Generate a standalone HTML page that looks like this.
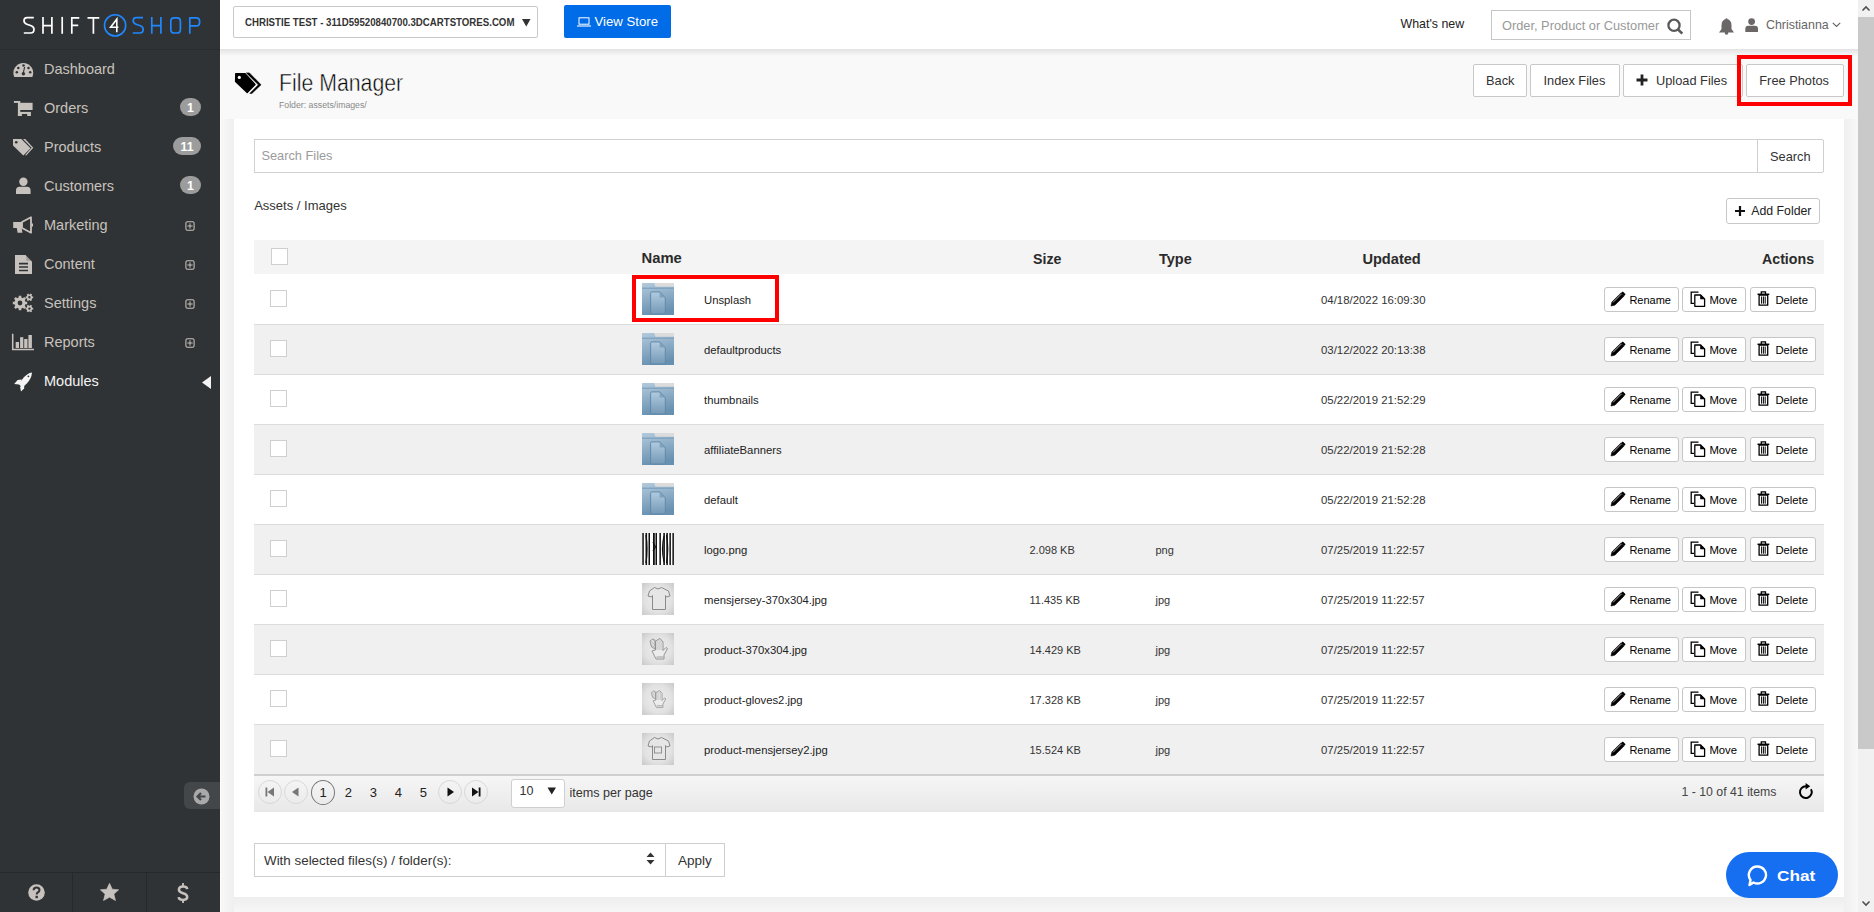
<!DOCTYPE html><html><head><meta charset="utf-8"><title>File Manager</title><style>
html,body{margin:0;padding:0;}
body{width:1874px;height:912px;overflow:hidden;position:relative;background:#f9f9f9;font-family:"Liberation Sans",sans-serif;}
.t{position:absolute;white-space:nowrap;line-height:1;}
.b{position:absolute;box-sizing:border-box;}
</style></head><body>
<div class="b" style="left:220px;top:49px;width:1638px;height:863px;background:#f9f9f9;"></div>
<div class="b" style="left:220px;top:119px;width:14px;height:793px;background:linear-gradient(to right,#f8f8f8,#efefef);"></div>
<div class="b" style="left:1844px;top:119px;width:14px;height:793px;background:linear-gradient(to right,#efefef,#f8f8f8);"></div>
<div class="b" style="left:234px;top:897px;width:1610px;height:15px;background:linear-gradient(#eeeeee,#f6f6f6);"></div>
<div class="b" style="left:220px;top:0px;width:1px;height:912px;background:#fdfdfd;"></div>
<div class="b" style="left:234px;top:119px;width:1610px;height:778px;background:#fff;"></div>
<div class="b" style="left:0px;top:0px;width:220px;height:912px;background:#303335;"></div>
<div class="b" style="left:0px;top:49px;width:220px;height:1px;background:#2a2d2f;"></div>
<svg class="b" style="left:0px;top:0px;" width="220" height="49" viewBox="0 0 220 49"><g fill="none" stroke="#fff" stroke-width="1.7" stroke-linecap="butt" stroke-linejoin="round">
<path d="M33.8 17.7 H27.2 Q24 17.7 24 20.8 Q24 23.2 26.8 24.2 L31.2 25.8 Q34 26.8 34 29.6 Q34 33 30.6 33 H23.8"/>
<path d="M43 16.9 V33.8 M51.9 16.9 V33.8 M43 25.6 H51.9"/>
<path d="M62.2 16.9 V33.8"/>
<path d="M71.8 16.9 V33.8 M71 17.8 H79.3 M71.8 25.4 H78.2"/>
<path d="M87.5 17.8 H99.3 M93.4 17.8 V33.8"/>
</g>
<circle cx="115.1" cy="25.4" r="10.6" fill="none" stroke="#1f88ff" stroke-width="1.6"/>
<path d="M116.8 32.2 V19.2 L110.6 27.3 H118.4" fill="none" stroke="#fff" stroke-width="1.6" stroke-linejoin="miter"/>
<g fill="none" stroke="#1f88ff" stroke-width="1.7" stroke-linejoin="round">
<path d="M143 17.7 H136.4 Q133.2 17.7 133.2 20.8 Q133.2 23.2 136 24.2 L140.4 25.8 Q143.2 26.8 143.2 29.6 Q143.2 33 139.8 33 H132.8"/>
<path d="M151.8 16.9 V33.8 M160.9 16.9 V33.8 M151.8 25.6 H160.9"/>
<path d="M174.2 17.8 h2.8 q3.4 0 3.4 3.6 v8 q0 3.6 -3.4 3.6 h-2.8 q-3.4 0 -3.4 -3.6 v-8 q0 -3.6 3.4 -3.6 z"/>
<path d="M189.8 33.8 V17.8 H196.2 Q199.6 17.8 199.6 21.2 V22.4 Q199.6 25.8 196.2 25.8 H189.8"/>
</g></svg>
<div class="t" style="left:44.00px;top:61.73px;font-size:14.5px;color:#c7c2bd;">Dashboard</div>
<div class="t" style="left:44.00px;top:100.73px;font-size:14.5px;color:#c7c2bd;">Orders</div>
<div class="b" style="left:180px;top:98px;width:21px;height:18px;background:#9c9c9c;border-radius:9px;"></div>
<div class="t" style="left:180.00px;top:102.29px;font-size:12.3px;color:#fff;font-weight:bold;width:21px;text-align:center;">1</div>
<div class="t" style="left:44.00px;top:139.73px;font-size:14.5px;color:#c7c2bd;">Products</div>
<div class="b" style="left:173px;top:137px;width:28px;height:18px;background:#9c9c9c;border-radius:9px;"></div>
<div class="t" style="left:173.00px;top:141.29px;font-size:12.3px;color:#fff;font-weight:bold;width:28px;text-align:center;">11</div>
<div class="t" style="left:44.00px;top:178.73px;font-size:14.5px;color:#c7c2bd;">Customers</div>
<div class="b" style="left:180px;top:176px;width:21px;height:18px;background:#9c9c9c;border-radius:9px;"></div>
<div class="t" style="left:180.00px;top:180.29px;font-size:12.3px;color:#fff;font-weight:bold;width:21px;text-align:center;">1</div>
<div class="t" style="left:44.00px;top:217.73px;font-size:14.5px;color:#c7c2bd;">Marketing</div>
<svg class="b" style="left:184.5px;top:221.4px;" width="10" height="10" viewBox="0 0 10 10"><rect x="0.9" y="0.7" width="8.2" height="8.6" rx="1.5" fill="none" stroke="#c7c2bd" stroke-width="1.05"/><path d="M5 2.3 V7.7 M2.4 5 H7.6" stroke="#c7c2bd" stroke-width="1"/></svg>
<div class="t" style="left:44.00px;top:256.73px;font-size:14.5px;color:#c7c2bd;">Content</div>
<svg class="b" style="left:184.5px;top:260.4px;" width="10" height="10" viewBox="0 0 10 10"><rect x="0.9" y="0.7" width="8.2" height="8.6" rx="1.5" fill="none" stroke="#c7c2bd" stroke-width="1.05"/><path d="M5 2.3 V7.7 M2.4 5 H7.6" stroke="#c7c2bd" stroke-width="1"/></svg>
<div class="t" style="left:44.00px;top:295.73px;font-size:14.5px;color:#c7c2bd;">Settings</div>
<svg class="b" style="left:184.5px;top:299.4px;" width="10" height="10" viewBox="0 0 10 10"><rect x="0.9" y="0.7" width="8.2" height="8.6" rx="1.5" fill="none" stroke="#c7c2bd" stroke-width="1.05"/><path d="M5 2.3 V7.7 M2.4 5 H7.6" stroke="#c7c2bd" stroke-width="1"/></svg>
<div class="t" style="left:44.00px;top:334.73px;font-size:14.5px;color:#c7c2bd;">Reports</div>
<svg class="b" style="left:184.5px;top:338.4px;" width="10" height="10" viewBox="0 0 10 10"><rect x="0.9" y="0.7" width="8.2" height="8.6" rx="1.5" fill="none" stroke="#c7c2bd" stroke-width="1.05"/><path d="M5 2.3 V7.7 M2.4 5 H7.6" stroke="#c7c2bd" stroke-width="1"/></svg>
<div class="t" style="left:44.00px;top:373.73px;font-size:14.5px;color:#f4f4f4;">Modules</div>
<svg class="b" style="left:202px;top:376px;" width="9" height="13" viewBox="0 0 9 13"><path d="M9 0 V13 L0 6.5 Z" fill="#f4f4f4"/></svg>
<svg class="b" style="left:13px;top:61px;" width="21" height="17" viewBox="0 0 21 17"><path d="M1.3 16 A9.9 9.9 0 1 1 19.3 16 Z" fill="#c7c2bd"/><g fill="#303335"><circle cx="5.3" cy="7" r="1.25"/><circle cx="10.5" cy="4.4" r="1.25"/><circle cx="15.5" cy="7" r="1.25"/><circle cx="3.8" cy="11.3" r="1.25"/><circle cx="17.2" cy="11.3" r="1.25"/><path d="M11.6 6 L10.2 12.5" stroke="#303335" stroke-width="1.1"/><circle cx="10.4" cy="12.8" r="1.7"/></g></svg>
<svg class="b" style="left:8px;top:95px;" width="30" height="25" viewBox="0 0 30 25"><g fill="#c7c2bd"><rect x="5.9" y="6" width="4.5" height="1.9"/><rect x="9.9" y="6" width="2.4" height="15"/><rect x="12" y="7.8" width="12.6" height="7.2"/><rect x="12" y="16.9" width="10.9" height="2.1"/><rect x="9.9" y="18.9" width="4" height="2.1"/><rect x="19.2" y="18.9" width="3.7" height="2.1"/></g></svg>
<svg class="b" style="left:12px;top:138px;" width="22" height="18" viewBox="0 0 22 18"><path d="M1 1 H9.3 L18.6 10.3 L11.3 17.6 L1 7.4 Z" fill="#c7c2bd"/><circle cx="4.2" cy="4.2" r="1.3" fill="#303335"/><path d="M11 1 H13.2 L21.3 9.8 L14.5 17.2 L13 17.2 L19.6 9.8 Z" fill="#c7c2bd"/></svg>
<svg class="b" style="left:15px;top:177px;" width="17" height="18" viewBox="0 0 17 18"><circle cx="8.4" cy="4.7" r="4.2" fill="#c7c2bd"/><path d="M1 17 V13.5 Q1 9.8 4.6 9.8 H12 Q15.6 9.8 15.6 13.5 V17 Z" fill="#c7c2bd"/></svg>
<svg class="b" style="left:13px;top:216px;" width="21" height="18" viewBox="0 0 21 18"><path d="M0.2 6 H9 V12 H8.6 L9.4 16.8 H4.6 L3.8 12 H0.2 Z" fill="#c7c2bd"/><path d="M9 6 L18 1.3 V16.7 L9 12 Z" fill="none" stroke="#c7c2bd" stroke-width="1.8" stroke-linejoin="round"/><path d="M18.5 7.5 H20 V10.5 H18.5 Z" fill="#c7c2bd"/></svg>
<svg class="b" style="left:14px;top:254px;" width="19" height="21" viewBox="0 0 19 21"><path d="M1 1 H11.5 L18 7.5 V20 H1 Z" fill="#c7c2bd"/><path d="M12.3 1.3 L17.7 6.7 H12.3 Z" fill="#303335" opacity="0.25"/><path d="M5 9.6 H14 M5 13 H14 M5 16.5 H14" stroke="#303335" stroke-width="1.6"/></svg>
<svg class="b" style="left:12px;top:293px;" width="23" height="21" viewBox="0 0 23 21"><path fill-rule="evenodd" fill="#c7c2bd" d="M15.19 8.72 L15.19 11.28 L13.43 11.35 L12.80 12.89 L13.99 14.17 L12.17 15.99 L10.89 14.80 L9.35 15.43 L9.28 17.19 L6.72 17.19 L6.65 15.43 L5.11 14.80 L3.83 15.99 L2.01 14.17 L3.20 12.89 L2.57 11.35 L0.81 11.28 L0.81 8.72 L2.57 8.65 L3.20 7.11 L2.01 5.83 L3.83 4.01 L5.11 5.20 L6.65 4.57 L6.72 2.81 L9.28 2.81 L9.35 4.57 L10.89 5.20 L12.17 4.01 L13.99 5.83 L12.80 7.11 L13.43 8.65 Z M10.40 10.00 A2.4 2.4 0 1 0 5.60 10.00 A2.4 2.4 0 1 0 10.40 10.00 Z M21.19 3.39 L21.19 5.21 L20.15 5.22 L19.58 6.22 L20.08 7.13 L18.51 8.04 L17.97 7.14 L16.83 7.14 L16.29 8.04 L14.72 7.13 L15.22 6.22 L14.65 5.22 L13.61 5.21 L13.61 3.39 L14.65 3.38 L15.22 2.38 L14.72 1.47 L16.29 0.56 L16.83 1.46 L17.97 1.46 L18.51 0.56 L20.08 1.47 L19.58 2.38 L20.15 3.38 Z M18.60 4.30 A1.2 1.2 0 1 0 16.20 4.30 A1.2 1.2 0 1 0 18.60 4.30 Z M21.19 14.69 L21.19 16.51 L20.15 16.52 L19.58 17.52 L20.08 18.43 L18.51 19.34 L17.97 18.44 L16.83 18.44 L16.29 19.34 L14.72 18.43 L15.22 17.52 L14.65 16.52 L13.61 16.51 L13.61 14.69 L14.65 14.68 L15.22 13.68 L14.72 12.77 L16.29 11.86 L16.83 12.76 L17.97 12.76 L18.51 11.86 L20.08 12.77 L19.58 13.68 L20.15 14.68 Z M18.60 15.60 A1.2 1.2 0 1 0 16.20 15.60 A1.2 1.2 0 1 0 18.60 15.60 Z"/></svg>
<svg class="b" style="left:8px;top:328px;" width="30" height="25" viewBox="0 0 30 25"><path d="M4.7 5.8 V21.4 H26" fill="none" stroke="#c7c2bd" stroke-width="1.5"/><g fill="#c7c2bd"><rect x="7.7" y="14" width="3.3" height="6"/><rect x="12.1" y="9.2" width="3.2" height="10.8"/><rect x="16.2" y="11" width="3.3" height="9"/><rect x="20.4" y="7" width="3.5" height="13"/></g></svg>
<svg class="b" style="left:12px;top:370px;" width="22" height="22" viewBox="0 0 22 22"><path d="M20 2.6 Q19.6 8.8 14.6 13.8 L10.2 17.6 L6.4 13.8 L10.2 9.4 Q15.2 3.1 20 2.6 Z" fill="#f4f4f4"/><path d="M9.8 9.6 L5.6 9.9 L2.2 13.9 L7.2 14.4 Z" fill="#f4f4f4"/><path d="M12.4 14.2 L12.1 18.4 L9 21.6 L8.1 16.8 Z" fill="#f4f4f4"/><circle cx="16.4" cy="6.3" r="0.9" fill="#303335"/></svg>
<div class="b" style="left:184px;top:782px;width:36px;height:27px;background:#444749;border-radius:6px 0 0 6px;"></div>
<svg class="b" style="left:193px;top:788px;" width="17" height="17" viewBox="0 0 17 17"><circle cx="8.5" cy="8.5" r="8" fill="#a9a9a9"/><path d="M12.5 8.5 H5 M8 5 L4.5 8.5 L8 12" fill="none" stroke="#444749" stroke-width="2.2"/></svg>
<div class="b" style="left:0px;top:872px;width:220px;height:1px;background:#262829;"></div>
<div class="b" style="left:72px;top:872px;width:1px;height:40px;background:#262829;"></div>
<div class="b" style="left:146px;top:872px;width:1px;height:40px;background:#262829;"></div>
<svg class="b" style="left:28px;top:884px;" width="17" height="17" viewBox="0 0 17 17"><circle cx="8.5" cy="8.5" r="8.3" fill="#c7c2bd"/><path d="M5.6 6.3 Q5.6 3.4 8.5 3.4 Q11.5 3.4 11.5 6.1 Q11.5 7.6 9.6 8.6 Q8.7 9.1 8.7 10.4" fill="none" stroke="#303335" stroke-width="2"/><rect x="7.5" y="11.8" width="2.4" height="2.4" fill="#303335"/></svg>
<svg class="b" style="left:100px;top:883px;" width="19" height="18" viewBox="0 0 19 18"><path d="M9.5 0.3 L12.3 6.2 L18.7 6.8 L13.9 11.1 L15.5 17.6 L9.5 14.2 L3.5 17.6 L5.1 11.1 L0.3 6.8 L6.7 6.2 Z" fill="#c7c2bd" stroke="#c7c2bd" stroke-width="0.6" stroke-linejoin="round"/></svg>
<svg class="b" style="left:176px;top:882px;" width="14" height="22" viewBox="0 0 14 22"><path d="M11.2 7.2 Q11 4.6 7 4.6 Q2.9 4.6 2.9 7.6 Q2.9 10.2 7 11.2 Q11.2 12.2 11.2 15.1 Q11.2 17.9 7 17.9 Q2.9 17.9 2.7 15.2" fill="none" stroke="#c7c2bd" stroke-width="2.5"/><path d="M7 1 V4.6 M7 17.9 V21" stroke="#c7c2bd" stroke-width="1.8"/></svg>
<div class="b" style="left:220px;top:49px;width:1638px;height:7px;background:linear-gradient(rgba(0,0,0,0.09),rgba(0,0,0,0));"></div>
<div class="b" style="left:220px;top:0px;width:1638px;height:49px;background:#fff;"></div>
<div class="b" style="left:233px;top:6px;width:305px;height:32px;border:1px solid #c9c9c9;border-radius:2px;background:#fff;"></div>
<div class="t" style="left:245.40px;top:17.65px;font-size:10.1px;color:#333;transform-origin:0 0;transform:scaleX(0.9574);font-weight:bold;">CHRISTIE TEST - 311D59520840700.3DCARTSTORES.COM</div>
<svg class="b" style="left:522px;top:18.5px;" width="9" height="8" viewBox="0 0 9 8"><path d="M0 0 H8.5 L4.25 7.5 Z" fill="#333"/></svg>
<div class="b" style="left:564px;top:5px;width:107px;height:33px;background:#006ce8;border-radius:2px;"></div>
<svg class="b" style="left:577px;top:17px;" width="14" height="10" viewBox="0 0 14 10"><rect x="2" y="0.8" width="10" height="6.4" fill="none" stroke="#fff" stroke-width="1"/><path d="M0 9 H14" stroke="#fff" stroke-width="1.1"/></svg>
<div class="t" style="left:594.50px;top:14.83px;font-size:13.2px;color:#fff;">View Store</div>
<div class="t" style="left:1400.50px;top:17.50px;font-size:12.4px;color:#222;">What's new</div>
<div class="b" style="left:1491px;top:10px;width:200px;height:30px;border:1px solid #c6c6c6;background:#fff;"></div>
<div class="t" style="left:1502.00px;top:20.06px;font-size:12.8px;color:#999;">Order, Product or Customer</div>
<svg class="b" style="left:1666px;top:18px;" width="18" height="17" viewBox="0 0 18 17"><circle cx="8" cy="7.3" r="5.6" fill="none" stroke="#595959" stroke-width="2.3"/><path d="M11.8 11.2 L16.3 15.6" stroke="#595959" stroke-width="2.6"/></svg>
<svg class="b" style="left:1718px;top:18px;" width="17" height="17" viewBox="0 0 17 17"><path d="M8.5 1 Q13.5 1.5 13.5 7.5 V11 L16 14.5 H1 L3.5 11 V7.5 Q3.5 1.5 8.5 1 Z" fill="#6b6766"/><circle cx="8.5" cy="15" r="1.8" fill="#6b6766"/><circle cx="8.5" cy="1.2" r="1" fill="#6b6766"/></svg>
<svg class="b" style="left:1745px;top:18px;" width="14" height="15" viewBox="0 0 14 15"><circle cx="6.6" cy="3.6" r="3.4" fill="#6b6766"/><path d="M0.3 14 V10.8 Q0.3 7.8 3.3 7.8 H10 Q13 7.8 13 10.8 V14 Z" fill="#6b6766"/></svg>
<div class="t" style="left:1766.00px;top:18.50px;font-size:12.4px;color:#666;">Christianna</div>
<svg class="b" style="left:1832px;top:22px;" width="9" height="6" viewBox="0 0 9 6"><path d="M0.8 0.8 L4.5 4.5 L8.2 0.8" fill="none" stroke="#666" stroke-width="1.2"/></svg>
<svg class="b" style="left:230px;top:68px;" width="36" height="30" viewBox="0 0 36 30"><path d="M5.8 5.6 H14.8 L25 16.6 L17.2 24.6 L5.6 13.4 Z" fill="#000" stroke="#000" stroke-width="1.4" stroke-linejoin="round"/><circle cx="9.3" cy="9.4" r="1.6" fill="#f9f9f9"/><path d="M16.4 4.9 H19.4 L31 16.8 L21.9 25.4 L19.8 25.4 L28.4 16.8 Z" fill="#000" stroke="#000" stroke-width="0.6" stroke-linejoin="round"/></svg>
<div class="t" style="left:278.80px;top:72.11px;font-size:23.5px;color:#000;transform-origin:0 0;transform:scaleX(0.9057);-webkit-text-stroke:0.5px #f9f9f9;">File Manager</div>
<div class="t" style="left:278.80px;top:99.57px;font-size:9.6px;color:#8a8a8a;transform-origin:0 0;transform:scaleX(0.9092);">Folder: assets/images/</div>
<div class="b" style="left:1473px;top:64px;width:54px;height:33px;border:1px solid #c8c8c8;border-radius:2px;background:#fff;"></div>
<div class="t" style="left:1486.00px;top:74.66px;font-size:12.8px;color:#333;">Back</div>
<div class="b" style="left:1530px;top:64px;width:90px;height:33px;border:1px solid #c8c8c8;border-radius:2px;background:#fff;"></div>
<div class="t" style="left:1543.50px;top:74.66px;font-size:12.8px;color:#333;">Index Files</div>
<div class="b" style="left:1623px;top:64px;width:120px;height:33px;border:1px solid #c8c8c8;border-radius:2px;background:#fff;"></div>
<div class="t" style="left:1656.00px;top:74.66px;font-size:12.8px;color:#333;">Upload Files</div>
<svg class="b" style="left:1636px;top:74px;" width="12" height="12" viewBox="0 0 12 12"><path d="M6 0.5 V11.5 M0.5 6 H11.5" stroke="#222" stroke-width="2.8"/></svg>
<div class="b" style="left:1746px;top:64px;width:98px;height:33px;border:1px solid #c8c8c8;border-radius:2px;background:#fff;"></div>
<div class="t" style="left:1759.30px;top:74.66px;font-size:12.8px;color:#333;">Free Photos</div>
<div class="b" style="left:1737px;top:55px;width:115px;height:51px;border:4px solid #ff0000;"></div>
<div class="b" style="left:254px;top:139px;width:1504px;height:34px;border:1px solid #d2d2d2;border-right:none;background:#fff;"></div>
<div class="t" style="left:261.40px;top:149.96px;font-size:12.8px;color:#9b9b9b;">Search Files</div>
<div class="b" style="left:1757px;top:139px;width:67px;height:34px;border:1px solid #cfcfcf;border-radius:0 2px 2px 0;background:#fff;"></div>
<div class="t" style="left:1770.00px;top:150.96px;font-size:12.8px;color:#333;">Search</div>
<div class="t" style="left:254.20px;top:198.80px;font-size:13px;color:#333;">Assets / Images</div>
<div class="b" style="left:1726px;top:198px;width:94px;height:26px;border:1px solid #c8c8c8;border-radius:3px;background:#fff;"></div>
<svg class="b" style="left:1735px;top:206px;" width="10" height="10" viewBox="0 0 10 10"><path d="M5 0 V10 M0 5 H10" stroke="#111" stroke-width="2.2"/></svg>
<div class="t" style="left:1751.30px;top:204.59px;font-size:12.3px;color:#222;">Add Folder</div>
<div class="b" style="left:254px;top:240px;width:1570px;height:34px;background:#f4f4f4;"></div>
<div class="b" style="left:271px;top:248px;width:17px;height:17px;border:1.5px solid #cfcfcf;background:#fff;"></div>
<div class="t" style="left:641.50px;top:251.47px;font-size:14.8px;color:#2b2b2b;font-weight:bold;">Name</div>
<div class="t" style="left:1033.00px;top:251.98px;font-size:14.2px;color:#2b2b2b;font-weight:bold;">Size</div>
<div class="t" style="left:1159.00px;top:251.73px;font-size:14.5px;color:#2b2b2b;font-weight:bold;">Type</div>
<div class="t" style="left:1362.40px;top:251.64px;font-size:14.6px;color:#2b2b2b;font-weight:bold;">Updated</div>
<div class="t" style="left:1762.00px;top:251.98px;font-size:14.2px;color:#2b2b2b;font-weight:bold;">Actions</div>
<div class="b" style="left:254px;top:274px;width:1570px;height:50px;background:#ffffff;"></div>
<div class="b" style="left:270px;top:290px;width:17px;height:17px;border:1.5px solid #cfcfcf;background:#fff;"></div>
<svg class="b" style="left:642px;top:283px;" width="32" height="32" viewBox="0 0 32 32"><defs><linearGradient id="fg" x1="0" y1="0" x2="0.25" y2="1"><stop offset="0" stop-color="#b3cadc"/><stop offset="1" stop-color="#6891b1"/></linearGradient><linearGradient id="fd" x1="0" y1="0" x2="0" y2="1"><stop offset="0" stop-color="#b1cbdf"/><stop offset="1" stop-color="#7499b7"/></linearGradient></defs>
<rect x="0" y="0" width="32" height="32" fill="url(#fg)"/><path d="M12.2 0 L13.4 3.8 H32 V0 Z" fill="#dcdcdc"/><rect x="0" y="4.6" width="32" height="1.3" fill="#7fa3bf"/>
<path d="M8.6 30.2 V10.2 Q8.6 8.9 9.9 8.9 H17.8 L23.3 14.9 V30.2 Q23.3 31 22.5 31 H9.4 Q8.6 31 8.6 30.2 Z" fill="url(#fd)" stroke="#5f86a5" stroke-width="0.9"/><path d="M17.6 9 V14.5 H23" fill="#6f95b3" opacity="0.7"/></svg>
<div class="t" style="left:704.00px;top:295.13px;font-size:11.3px;color:#222;">Unsplash</div>
<div class="t" style="left:1321.00px;top:295.05px;font-size:11.4px;color:#333;">04/18/2022 16:09:30</div>
<div class="b" style="left:1604px;top:287px;width:75px;height:25px;border:1px solid #c6c6c6;border-radius:3px;background:#fff;"></div>
<div class="b" style="left:1682px;top:287px;width:64px;height:25px;border:1px solid #c6c6c6;border-radius:3px;background:#fff;"></div>
<div class="b" style="left:1750px;top:287px;width:66px;height:25px;border:1px solid #c6c6c6;border-radius:3px;background:#fff;"></div>
<svg class="b" style="left:1610px;top:291px;" width="16" height="16" viewBox="0 0 16 16"><path d="M1 15 L1.9 11 L11 1.9 L14.1 5 L5 14.1 Z" fill="#000" stroke="#000" stroke-width="0.6" stroke-linejoin="round"/><path d="M3 11.4 L11.4 3" stroke="#fff" stroke-width="0.7"/><path d="M11 1.9 L12.8 0.4 L15.6 3.2 L14.1 5 Z" fill="#000"/></svg>
<div class="t" style="left:1629.40px;top:294.99px;font-size:11px;color:#000;">Rename</div>
<svg class="b" style="left:1690px;top:291px;" width="16" height="16" viewBox="0 0 16 16"><path d="M8.5 1.2 H1.2 V12.3 H4" fill="none" stroke="#000" stroke-width="1.3"/><path d="M4.8 4 H10.6 L14.6 8 V15.3 H4.8 Z" fill="none" stroke="#000" stroke-width="1.3" stroke-linejoin="round"/><path d="M10.2 3.5 L15 8.3 H10.2 Z" fill="#000"/></svg>
<div class="t" style="left:1709.40px;top:294.73px;font-size:11.3px;color:#000;">Move</div>
<svg class="b" style="left:1757px;top:291px;" width="13" height="15" viewBox="0 0 13 15"><path d="M0.5 3.3 H12.3" stroke="#000" stroke-width="1.5"/><path d="M4.3 3 V0.9 H8.5 V3" fill="none" stroke="#000" stroke-width="1.3"/><path d="M2.1 4 H10.7 V14.2 H2.1 Z" fill="none" stroke="#000" stroke-width="1.3"/><path d="M4.6 5.5 V12.7 M6.4 5.5 V12.7 M8.2 5.5 V12.7" stroke="#000" stroke-width="1"/></svg>
<div class="t" style="left:1775.40px;top:294.73px;font-size:11.3px;color:#000;">Delete</div>
<div class="b" style="left:254px;top:324px;width:1570px;height:50px;background:#f0f0f0;"></div>
<div class="b" style="left:270px;top:340px;width:17px;height:17px;border:1.5px solid #cfcfcf;background:#fff;"></div>
<svg class="b" style="left:642px;top:333px;" width="32" height="32" viewBox="0 0 32 32"><defs><linearGradient id="fg" x1="0" y1="0" x2="0.25" y2="1"><stop offset="0" stop-color="#b3cadc"/><stop offset="1" stop-color="#6891b1"/></linearGradient><linearGradient id="fd" x1="0" y1="0" x2="0" y2="1"><stop offset="0" stop-color="#b1cbdf"/><stop offset="1" stop-color="#7499b7"/></linearGradient></defs>
<rect x="0" y="0" width="32" height="32" fill="url(#fg)"/><path d="M12.2 0 L13.4 3.8 H32 V0 Z" fill="#dcdcdc"/><rect x="0" y="4.6" width="32" height="1.3" fill="#7fa3bf"/>
<path d="M8.6 30.2 V10.2 Q8.6 8.9 9.9 8.9 H17.8 L23.3 14.9 V30.2 Q23.3 31 22.5 31 H9.4 Q8.6 31 8.6 30.2 Z" fill="url(#fd)" stroke="#5f86a5" stroke-width="0.9"/><path d="M17.6 9 V14.5 H23" fill="#6f95b3" opacity="0.7"/></svg>
<div class="t" style="left:704.00px;top:345.13px;font-size:11.3px;color:#222;">defaultproducts</div>
<div class="t" style="left:1321.00px;top:345.05px;font-size:11.4px;color:#333;">03/12/2022 20:13:38</div>
<div class="b" style="left:1604px;top:337px;width:75px;height:25px;border:1px solid #c6c6c6;border-radius:3px;background:#fff;"></div>
<div class="b" style="left:1682px;top:337px;width:64px;height:25px;border:1px solid #c6c6c6;border-radius:3px;background:#fff;"></div>
<div class="b" style="left:1750px;top:337px;width:66px;height:25px;border:1px solid #c6c6c6;border-radius:3px;background:#fff;"></div>
<svg class="b" style="left:1610px;top:341px;" width="16" height="16" viewBox="0 0 16 16"><path d="M1 15 L1.9 11 L11 1.9 L14.1 5 L5 14.1 Z" fill="#000" stroke="#000" stroke-width="0.6" stroke-linejoin="round"/><path d="M3 11.4 L11.4 3" stroke="#fff" stroke-width="0.7"/><path d="M11 1.9 L12.8 0.4 L15.6 3.2 L14.1 5 Z" fill="#000"/></svg>
<div class="t" style="left:1629.40px;top:344.99px;font-size:11px;color:#000;">Rename</div>
<svg class="b" style="left:1690px;top:341px;" width="16" height="16" viewBox="0 0 16 16"><path d="M8.5 1.2 H1.2 V12.3 H4" fill="none" stroke="#000" stroke-width="1.3"/><path d="M4.8 4 H10.6 L14.6 8 V15.3 H4.8 Z" fill="none" stroke="#000" stroke-width="1.3" stroke-linejoin="round"/><path d="M10.2 3.5 L15 8.3 H10.2 Z" fill="#000"/></svg>
<div class="t" style="left:1709.40px;top:344.73px;font-size:11.3px;color:#000;">Move</div>
<svg class="b" style="left:1757px;top:341px;" width="13" height="15" viewBox="0 0 13 15"><path d="M0.5 3.3 H12.3" stroke="#000" stroke-width="1.5"/><path d="M4.3 3 V0.9 H8.5 V3" fill="none" stroke="#000" stroke-width="1.3"/><path d="M2.1 4 H10.7 V14.2 H2.1 Z" fill="none" stroke="#000" stroke-width="1.3"/><path d="M4.6 5.5 V12.7 M6.4 5.5 V12.7 M8.2 5.5 V12.7" stroke="#000" stroke-width="1"/></svg>
<div class="t" style="left:1775.40px;top:344.73px;font-size:11.3px;color:#000;">Delete</div>
<div class="b" style="left:254px;top:374px;width:1570px;height:50px;background:#ffffff;"></div>
<div class="b" style="left:270px;top:390px;width:17px;height:17px;border:1.5px solid #cfcfcf;background:#fff;"></div>
<svg class="b" style="left:642px;top:383px;" width="32" height="32" viewBox="0 0 32 32"><defs><linearGradient id="fg" x1="0" y1="0" x2="0.25" y2="1"><stop offset="0" stop-color="#b3cadc"/><stop offset="1" stop-color="#6891b1"/></linearGradient><linearGradient id="fd" x1="0" y1="0" x2="0" y2="1"><stop offset="0" stop-color="#b1cbdf"/><stop offset="1" stop-color="#7499b7"/></linearGradient></defs>
<rect x="0" y="0" width="32" height="32" fill="url(#fg)"/><path d="M12.2 0 L13.4 3.8 H32 V0 Z" fill="#dcdcdc"/><rect x="0" y="4.6" width="32" height="1.3" fill="#7fa3bf"/>
<path d="M8.6 30.2 V10.2 Q8.6 8.9 9.9 8.9 H17.8 L23.3 14.9 V30.2 Q23.3 31 22.5 31 H9.4 Q8.6 31 8.6 30.2 Z" fill="url(#fd)" stroke="#5f86a5" stroke-width="0.9"/><path d="M17.6 9 V14.5 H23" fill="#6f95b3" opacity="0.7"/></svg>
<div class="t" style="left:704.00px;top:395.13px;font-size:11.3px;color:#222;">thumbnails</div>
<div class="t" style="left:1321.00px;top:395.05px;font-size:11.4px;color:#333;">05/22/2019 21:52:29</div>
<div class="b" style="left:1604px;top:387px;width:75px;height:25px;border:1px solid #c6c6c6;border-radius:3px;background:#fff;"></div>
<div class="b" style="left:1682px;top:387px;width:64px;height:25px;border:1px solid #c6c6c6;border-radius:3px;background:#fff;"></div>
<div class="b" style="left:1750px;top:387px;width:66px;height:25px;border:1px solid #c6c6c6;border-radius:3px;background:#fff;"></div>
<svg class="b" style="left:1610px;top:391px;" width="16" height="16" viewBox="0 0 16 16"><path d="M1 15 L1.9 11 L11 1.9 L14.1 5 L5 14.1 Z" fill="#000" stroke="#000" stroke-width="0.6" stroke-linejoin="round"/><path d="M3 11.4 L11.4 3" stroke="#fff" stroke-width="0.7"/><path d="M11 1.9 L12.8 0.4 L15.6 3.2 L14.1 5 Z" fill="#000"/></svg>
<div class="t" style="left:1629.40px;top:394.99px;font-size:11px;color:#000;">Rename</div>
<svg class="b" style="left:1690px;top:391px;" width="16" height="16" viewBox="0 0 16 16"><path d="M8.5 1.2 H1.2 V12.3 H4" fill="none" stroke="#000" stroke-width="1.3"/><path d="M4.8 4 H10.6 L14.6 8 V15.3 H4.8 Z" fill="none" stroke="#000" stroke-width="1.3" stroke-linejoin="round"/><path d="M10.2 3.5 L15 8.3 H10.2 Z" fill="#000"/></svg>
<div class="t" style="left:1709.40px;top:394.73px;font-size:11.3px;color:#000;">Move</div>
<svg class="b" style="left:1757px;top:391px;" width="13" height="15" viewBox="0 0 13 15"><path d="M0.5 3.3 H12.3" stroke="#000" stroke-width="1.5"/><path d="M4.3 3 V0.9 H8.5 V3" fill="none" stroke="#000" stroke-width="1.3"/><path d="M2.1 4 H10.7 V14.2 H2.1 Z" fill="none" stroke="#000" stroke-width="1.3"/><path d="M4.6 5.5 V12.7 M6.4 5.5 V12.7 M8.2 5.5 V12.7" stroke="#000" stroke-width="1"/></svg>
<div class="t" style="left:1775.40px;top:394.73px;font-size:11.3px;color:#000;">Delete</div>
<div class="b" style="left:254px;top:424px;width:1570px;height:50px;background:#f0f0f0;"></div>
<div class="b" style="left:270px;top:440px;width:17px;height:17px;border:1.5px solid #cfcfcf;background:#fff;"></div>
<svg class="b" style="left:642px;top:433px;" width="32" height="32" viewBox="0 0 32 32"><defs><linearGradient id="fg" x1="0" y1="0" x2="0.25" y2="1"><stop offset="0" stop-color="#b3cadc"/><stop offset="1" stop-color="#6891b1"/></linearGradient><linearGradient id="fd" x1="0" y1="0" x2="0" y2="1"><stop offset="0" stop-color="#b1cbdf"/><stop offset="1" stop-color="#7499b7"/></linearGradient></defs>
<rect x="0" y="0" width="32" height="32" fill="url(#fg)"/><path d="M12.2 0 L13.4 3.8 H32 V0 Z" fill="#dcdcdc"/><rect x="0" y="4.6" width="32" height="1.3" fill="#7fa3bf"/>
<path d="M8.6 30.2 V10.2 Q8.6 8.9 9.9 8.9 H17.8 L23.3 14.9 V30.2 Q23.3 31 22.5 31 H9.4 Q8.6 31 8.6 30.2 Z" fill="url(#fd)" stroke="#5f86a5" stroke-width="0.9"/><path d="M17.6 9 V14.5 H23" fill="#6f95b3" opacity="0.7"/></svg>
<div class="t" style="left:704.00px;top:445.13px;font-size:11.3px;color:#222;">affiliateBanners</div>
<div class="t" style="left:1321.00px;top:445.05px;font-size:11.4px;color:#333;">05/22/2019 21:52:28</div>
<div class="b" style="left:1604px;top:437px;width:75px;height:25px;border:1px solid #c6c6c6;border-radius:3px;background:#fff;"></div>
<div class="b" style="left:1682px;top:437px;width:64px;height:25px;border:1px solid #c6c6c6;border-radius:3px;background:#fff;"></div>
<div class="b" style="left:1750px;top:437px;width:66px;height:25px;border:1px solid #c6c6c6;border-radius:3px;background:#fff;"></div>
<svg class="b" style="left:1610px;top:441px;" width="16" height="16" viewBox="0 0 16 16"><path d="M1 15 L1.9 11 L11 1.9 L14.1 5 L5 14.1 Z" fill="#000" stroke="#000" stroke-width="0.6" stroke-linejoin="round"/><path d="M3 11.4 L11.4 3" stroke="#fff" stroke-width="0.7"/><path d="M11 1.9 L12.8 0.4 L15.6 3.2 L14.1 5 Z" fill="#000"/></svg>
<div class="t" style="left:1629.40px;top:444.99px;font-size:11px;color:#000;">Rename</div>
<svg class="b" style="left:1690px;top:441px;" width="16" height="16" viewBox="0 0 16 16"><path d="M8.5 1.2 H1.2 V12.3 H4" fill="none" stroke="#000" stroke-width="1.3"/><path d="M4.8 4 H10.6 L14.6 8 V15.3 H4.8 Z" fill="none" stroke="#000" stroke-width="1.3" stroke-linejoin="round"/><path d="M10.2 3.5 L15 8.3 H10.2 Z" fill="#000"/></svg>
<div class="t" style="left:1709.40px;top:444.73px;font-size:11.3px;color:#000;">Move</div>
<svg class="b" style="left:1757px;top:441px;" width="13" height="15" viewBox="0 0 13 15"><path d="M0.5 3.3 H12.3" stroke="#000" stroke-width="1.5"/><path d="M4.3 3 V0.9 H8.5 V3" fill="none" stroke="#000" stroke-width="1.3"/><path d="M2.1 4 H10.7 V14.2 H2.1 Z" fill="none" stroke="#000" stroke-width="1.3"/><path d="M4.6 5.5 V12.7 M6.4 5.5 V12.7 M8.2 5.5 V12.7" stroke="#000" stroke-width="1"/></svg>
<div class="t" style="left:1775.40px;top:444.73px;font-size:11.3px;color:#000;">Delete</div>
<div class="b" style="left:254px;top:474px;width:1570px;height:50px;background:#ffffff;"></div>
<div class="b" style="left:270px;top:490px;width:17px;height:17px;border:1.5px solid #cfcfcf;background:#fff;"></div>
<svg class="b" style="left:642px;top:483px;" width="32" height="32" viewBox="0 0 32 32"><defs><linearGradient id="fg" x1="0" y1="0" x2="0.25" y2="1"><stop offset="0" stop-color="#b3cadc"/><stop offset="1" stop-color="#6891b1"/></linearGradient><linearGradient id="fd" x1="0" y1="0" x2="0" y2="1"><stop offset="0" stop-color="#b1cbdf"/><stop offset="1" stop-color="#7499b7"/></linearGradient></defs>
<rect x="0" y="0" width="32" height="32" fill="url(#fg)"/><path d="M12.2 0 L13.4 3.8 H32 V0 Z" fill="#dcdcdc"/><rect x="0" y="4.6" width="32" height="1.3" fill="#7fa3bf"/>
<path d="M8.6 30.2 V10.2 Q8.6 8.9 9.9 8.9 H17.8 L23.3 14.9 V30.2 Q23.3 31 22.5 31 H9.4 Q8.6 31 8.6 30.2 Z" fill="url(#fd)" stroke="#5f86a5" stroke-width="0.9"/><path d="M17.6 9 V14.5 H23" fill="#6f95b3" opacity="0.7"/></svg>
<div class="t" style="left:704.00px;top:495.13px;font-size:11.3px;color:#222;">default</div>
<div class="t" style="left:1321.00px;top:495.05px;font-size:11.4px;color:#333;">05/22/2019 21:52:28</div>
<div class="b" style="left:1604px;top:487px;width:75px;height:25px;border:1px solid #c6c6c6;border-radius:3px;background:#fff;"></div>
<div class="b" style="left:1682px;top:487px;width:64px;height:25px;border:1px solid #c6c6c6;border-radius:3px;background:#fff;"></div>
<div class="b" style="left:1750px;top:487px;width:66px;height:25px;border:1px solid #c6c6c6;border-radius:3px;background:#fff;"></div>
<svg class="b" style="left:1610px;top:491px;" width="16" height="16" viewBox="0 0 16 16"><path d="M1 15 L1.9 11 L11 1.9 L14.1 5 L5 14.1 Z" fill="#000" stroke="#000" stroke-width="0.6" stroke-linejoin="round"/><path d="M3 11.4 L11.4 3" stroke="#fff" stroke-width="0.7"/><path d="M11 1.9 L12.8 0.4 L15.6 3.2 L14.1 5 Z" fill="#000"/></svg>
<div class="t" style="left:1629.40px;top:494.99px;font-size:11px;color:#000;">Rename</div>
<svg class="b" style="left:1690px;top:491px;" width="16" height="16" viewBox="0 0 16 16"><path d="M8.5 1.2 H1.2 V12.3 H4" fill="none" stroke="#000" stroke-width="1.3"/><path d="M4.8 4 H10.6 L14.6 8 V15.3 H4.8 Z" fill="none" stroke="#000" stroke-width="1.3" stroke-linejoin="round"/><path d="M10.2 3.5 L15 8.3 H10.2 Z" fill="#000"/></svg>
<div class="t" style="left:1709.40px;top:494.73px;font-size:11.3px;color:#000;">Move</div>
<svg class="b" style="left:1757px;top:491px;" width="13" height="15" viewBox="0 0 13 15"><path d="M0.5 3.3 H12.3" stroke="#000" stroke-width="1.5"/><path d="M4.3 3 V0.9 H8.5 V3" fill="none" stroke="#000" stroke-width="1.3"/><path d="M2.1 4 H10.7 V14.2 H2.1 Z" fill="none" stroke="#000" stroke-width="1.3"/><path d="M4.6 5.5 V12.7 M6.4 5.5 V12.7 M8.2 5.5 V12.7" stroke="#000" stroke-width="1"/></svg>
<div class="t" style="left:1775.40px;top:494.73px;font-size:11.3px;color:#000;">Delete</div>
<div class="b" style="left:254px;top:524px;width:1570px;height:50px;background:#f0f0f0;"></div>
<div class="b" style="left:270px;top:540px;width:17px;height:17px;border:1.5px solid #cfcfcf;background:#fff;"></div>
<svg class="b" style="left:642px;top:533px;" width="32" height="32" viewBox="0 0 32 32"><rect x="0" y="0" width="32" height="32" fill="#fff"/><rect x="0.3" y="0" width="1.5" height="32" fill="#111"/><rect x="3.5" y="0" width="1.6" height="32" fill="#111"/><rect x="6.5" y="0" width="1.5" height="32" fill="#111"/><rect x="11" y="0" width="1.8" height="32" fill="#111"/><rect x="13.5" y="0" width="1.5" height="32" fill="#111"/><rect x="17.4" y="0" width="1.5" height="32" fill="#111"/><rect x="21.3" y="0" width="1.6" height="32" fill="#111"/><rect x="24.3" y="0" width="1.6" height="32" fill="#111"/><rect x="27.4" y="0" width="1.5" height="32" fill="#111"/><rect x="30.4" y="0" width="1.5" height="32" fill="#111"/><path d="M4 2 Q6 16 4 30 M22 3 Q19 16 22 29 M24.5 2 Q27 16 24.5 30 M11 9 L13.5 14 L11 18" fill="none" stroke="#111" stroke-width="1.2"/></svg>
<div class="t" style="left:704.00px;top:545.13px;font-size:11.3px;color:#222;">logo.png</div>
<div class="t" style="left:1029.50px;top:545.39px;font-size:11px;color:#333;">2.098 KB</div>
<div class="t" style="left:1155.50px;top:545.39px;font-size:11px;color:#333;">png</div>
<div class="t" style="left:1321.00px;top:545.05px;font-size:11.4px;color:#333;">07/25/2019 11:22:57</div>
<div class="b" style="left:1604px;top:537px;width:75px;height:25px;border:1px solid #c6c6c6;border-radius:3px;background:#fff;"></div>
<div class="b" style="left:1682px;top:537px;width:64px;height:25px;border:1px solid #c6c6c6;border-radius:3px;background:#fff;"></div>
<div class="b" style="left:1750px;top:537px;width:66px;height:25px;border:1px solid #c6c6c6;border-radius:3px;background:#fff;"></div>
<svg class="b" style="left:1610px;top:541px;" width="16" height="16" viewBox="0 0 16 16"><path d="M1 15 L1.9 11 L11 1.9 L14.1 5 L5 14.1 Z" fill="#000" stroke="#000" stroke-width="0.6" stroke-linejoin="round"/><path d="M3 11.4 L11.4 3" stroke="#fff" stroke-width="0.7"/><path d="M11 1.9 L12.8 0.4 L15.6 3.2 L14.1 5 Z" fill="#000"/></svg>
<div class="t" style="left:1629.40px;top:544.99px;font-size:11px;color:#000;">Rename</div>
<svg class="b" style="left:1690px;top:541px;" width="16" height="16" viewBox="0 0 16 16"><path d="M8.5 1.2 H1.2 V12.3 H4" fill="none" stroke="#000" stroke-width="1.3"/><path d="M4.8 4 H10.6 L14.6 8 V15.3 H4.8 Z" fill="none" stroke="#000" stroke-width="1.3" stroke-linejoin="round"/><path d="M10.2 3.5 L15 8.3 H10.2 Z" fill="#000"/></svg>
<div class="t" style="left:1709.40px;top:544.73px;font-size:11.3px;color:#000;">Move</div>
<svg class="b" style="left:1757px;top:541px;" width="13" height="15" viewBox="0 0 13 15"><path d="M0.5 3.3 H12.3" stroke="#000" stroke-width="1.5"/><path d="M4.3 3 V0.9 H8.5 V3" fill="none" stroke="#000" stroke-width="1.3"/><path d="M2.1 4 H10.7 V14.2 H2.1 Z" fill="none" stroke="#000" stroke-width="1.3"/><path d="M4.6 5.5 V12.7 M6.4 5.5 V12.7 M8.2 5.5 V12.7" stroke="#000" stroke-width="1"/></svg>
<div class="t" style="left:1775.40px;top:544.73px;font-size:11.3px;color:#000;">Delete</div>
<div class="b" style="left:254px;top:574px;width:1570px;height:50px;background:#ffffff;"></div>
<div class="b" style="left:270px;top:590px;width:17px;height:17px;border:1.5px solid #cfcfcf;background:#fff;"></div>
<svg class="b" style="left:642px;top:583px;" width="32" height="32" viewBox="0 0 32 32"><defs><radialGradient id="rg6" cx="0.5" cy="0.5" r="0.7"><stop offset="0" stop-color="#ececec"/><stop offset="0.6" stop-color="#e2e2e2"/><stop offset="1" stop-color="#c9c9c9"/></radialGradient></defs><rect x="0" y="0" width="32" height="32" fill="url(#rg6)"/><path d="M12.5 4.5 Q16 7.5 19.5 4.5 L26.5 8 L28 13 L24.5 14 L23.5 12.5 V26.5 H10.5 V12.5 L9.5 14 L6 13 L7.5 8 Z" fill="#e6e6e6" stroke="#8a8a8a" stroke-width="1" stroke-linejoin="round"/></svg>
<div class="t" style="left:704.00px;top:595.13px;font-size:11.3px;color:#222;">mensjersey-370x304.jpg</div>
<div class="t" style="left:1029.50px;top:595.39px;font-size:11px;color:#333;">11.435 KB</div>
<div class="t" style="left:1155.50px;top:595.39px;font-size:11px;color:#333;">jpg</div>
<div class="t" style="left:1321.00px;top:595.05px;font-size:11.4px;color:#333;">07/25/2019 11:22:57</div>
<div class="b" style="left:1604px;top:587px;width:75px;height:25px;border:1px solid #c6c6c6;border-radius:3px;background:#fff;"></div>
<div class="b" style="left:1682px;top:587px;width:64px;height:25px;border:1px solid #c6c6c6;border-radius:3px;background:#fff;"></div>
<div class="b" style="left:1750px;top:587px;width:66px;height:25px;border:1px solid #c6c6c6;border-radius:3px;background:#fff;"></div>
<svg class="b" style="left:1610px;top:591px;" width="16" height="16" viewBox="0 0 16 16"><path d="M1 15 L1.9 11 L11 1.9 L14.1 5 L5 14.1 Z" fill="#000" stroke="#000" stroke-width="0.6" stroke-linejoin="round"/><path d="M3 11.4 L11.4 3" stroke="#fff" stroke-width="0.7"/><path d="M11 1.9 L12.8 0.4 L15.6 3.2 L14.1 5 Z" fill="#000"/></svg>
<div class="t" style="left:1629.40px;top:594.99px;font-size:11px;color:#000;">Rename</div>
<svg class="b" style="left:1690px;top:591px;" width="16" height="16" viewBox="0 0 16 16"><path d="M8.5 1.2 H1.2 V12.3 H4" fill="none" stroke="#000" stroke-width="1.3"/><path d="M4.8 4 H10.6 L14.6 8 V15.3 H4.8 Z" fill="none" stroke="#000" stroke-width="1.3" stroke-linejoin="round"/><path d="M10.2 3.5 L15 8.3 H10.2 Z" fill="#000"/></svg>
<div class="t" style="left:1709.40px;top:594.73px;font-size:11.3px;color:#000;">Move</div>
<svg class="b" style="left:1757px;top:591px;" width="13" height="15" viewBox="0 0 13 15"><path d="M0.5 3.3 H12.3" stroke="#000" stroke-width="1.5"/><path d="M4.3 3 V0.9 H8.5 V3" fill="none" stroke="#000" stroke-width="1.3"/><path d="M2.1 4 H10.7 V14.2 H2.1 Z" fill="none" stroke="#000" stroke-width="1.3"/><path d="M4.6 5.5 V12.7 M6.4 5.5 V12.7 M8.2 5.5 V12.7" stroke="#000" stroke-width="1"/></svg>
<div class="t" style="left:1775.40px;top:594.73px;font-size:11.3px;color:#000;">Delete</div>
<div class="b" style="left:254px;top:624px;width:1570px;height:50px;background:#f0f0f0;"></div>
<div class="b" style="left:270px;top:640px;width:17px;height:17px;border:1.5px solid #cfcfcf;background:#fff;"></div>
<svg class="b" style="left:642px;top:633px;" width="32" height="32" viewBox="0 0 32 32"><defs><radialGradient id="rg7" cx="0.5" cy="0.5" r="0.7"><stop offset="0" stop-color="#ececec"/><stop offset="0.6" stop-color="#e2e2e2"/><stop offset="1" stop-color="#c9c9c9"/></radialGradient></defs><rect x="0" y="0" width="32" height="32" fill="url(#rg7)"/><g transform="translate(16 17) scale(1.0) translate(-16 -17)"><path d="M8 8 L10.5 6 L13 7 L13 16 L9.5 14 Z" fill="#e0e0e0" stroke="#8a8a8a" stroke-width="0.8"/><path d="M8.5 8 L13 12 M8 11 L12 14 M10.5 6 L12.5 8.5" stroke="#9a9a9a" stroke-width="0.5"/><path d="M13.5 8 L18 5.5 L21 9 V17.5 L24 14.5 L25.5 15.5 L22 22 V26 H14 L10 18 L13.5 17 Z" fill="#ececec" stroke="#8a8a8a" stroke-width="0.9" stroke-linejoin="round"/><path d="M15 7.5 V17 M17 6.5 V17 M19 7 V17" stroke="#b0b0b0" stroke-width="0.7"/><path d="M14.5 24 H21.5" stroke="#8a8a8a" stroke-width="0.8"/></g></svg>
<div class="t" style="left:704.00px;top:645.13px;font-size:11.3px;color:#222;">product-370x304.jpg</div>
<div class="t" style="left:1029.50px;top:645.39px;font-size:11px;color:#333;">14.429 KB</div>
<div class="t" style="left:1155.50px;top:645.39px;font-size:11px;color:#333;">jpg</div>
<div class="t" style="left:1321.00px;top:645.05px;font-size:11.4px;color:#333;">07/25/2019 11:22:57</div>
<div class="b" style="left:1604px;top:637px;width:75px;height:25px;border:1px solid #c6c6c6;border-radius:3px;background:#fff;"></div>
<div class="b" style="left:1682px;top:637px;width:64px;height:25px;border:1px solid #c6c6c6;border-radius:3px;background:#fff;"></div>
<div class="b" style="left:1750px;top:637px;width:66px;height:25px;border:1px solid #c6c6c6;border-radius:3px;background:#fff;"></div>
<svg class="b" style="left:1610px;top:641px;" width="16" height="16" viewBox="0 0 16 16"><path d="M1 15 L1.9 11 L11 1.9 L14.1 5 L5 14.1 Z" fill="#000" stroke="#000" stroke-width="0.6" stroke-linejoin="round"/><path d="M3 11.4 L11.4 3" stroke="#fff" stroke-width="0.7"/><path d="M11 1.9 L12.8 0.4 L15.6 3.2 L14.1 5 Z" fill="#000"/></svg>
<div class="t" style="left:1629.40px;top:644.99px;font-size:11px;color:#000;">Rename</div>
<svg class="b" style="left:1690px;top:641px;" width="16" height="16" viewBox="0 0 16 16"><path d="M8.5 1.2 H1.2 V12.3 H4" fill="none" stroke="#000" stroke-width="1.3"/><path d="M4.8 4 H10.6 L14.6 8 V15.3 H4.8 Z" fill="none" stroke="#000" stroke-width="1.3" stroke-linejoin="round"/><path d="M10.2 3.5 L15 8.3 H10.2 Z" fill="#000"/></svg>
<div class="t" style="left:1709.40px;top:644.73px;font-size:11.3px;color:#000;">Move</div>
<svg class="b" style="left:1757px;top:641px;" width="13" height="15" viewBox="0 0 13 15"><path d="M0.5 3.3 H12.3" stroke="#000" stroke-width="1.5"/><path d="M4.3 3 V0.9 H8.5 V3" fill="none" stroke="#000" stroke-width="1.3"/><path d="M2.1 4 H10.7 V14.2 H2.1 Z" fill="none" stroke="#000" stroke-width="1.3"/><path d="M4.6 5.5 V12.7 M6.4 5.5 V12.7 M8.2 5.5 V12.7" stroke="#000" stroke-width="1"/></svg>
<div class="t" style="left:1775.40px;top:644.73px;font-size:11.3px;color:#000;">Delete</div>
<div class="b" style="left:254px;top:674px;width:1570px;height:50px;background:#ffffff;"></div>
<div class="b" style="left:270px;top:690px;width:17px;height:17px;border:1.5px solid #cfcfcf;background:#fff;"></div>
<svg class="b" style="left:642px;top:683px;" width="32" height="32" viewBox="0 0 32 32"><defs><radialGradient id="rg8" cx="0.5" cy="0.5" r="0.7"><stop offset="0" stop-color="#ececec"/><stop offset="0.6" stop-color="#e2e2e2"/><stop offset="1" stop-color="#c9c9c9"/></radialGradient></defs><rect x="0" y="0" width="32" height="32" fill="url(#rg8)"/><g transform="translate(16 17) scale(0.82) translate(-16 -17)"><path d="M8 8 L10.5 6 L13 7 L13 16 L9.5 14 Z" fill="#e0e0e0" stroke="#8a8a8a" stroke-width="0.8"/><path d="M8.5 8 L13 12 M8 11 L12 14 M10.5 6 L12.5 8.5" stroke="#9a9a9a" stroke-width="0.5"/><path d="M13.5 8 L18 5.5 L21 9 V17.5 L24 14.5 L25.5 15.5 L22 22 V26 H14 L10 18 L13.5 17 Z" fill="#ececec" stroke="#8a8a8a" stroke-width="0.9" stroke-linejoin="round"/><path d="M15 7.5 V17 M17 6.5 V17 M19 7 V17" stroke="#b0b0b0" stroke-width="0.7"/><path d="M14.5 24 H21.5" stroke="#8a8a8a" stroke-width="0.8"/></g></svg>
<div class="t" style="left:704.00px;top:695.13px;font-size:11.3px;color:#222;">product-gloves2.jpg</div>
<div class="t" style="left:1029.50px;top:695.39px;font-size:11px;color:#333;">17.328 KB</div>
<div class="t" style="left:1155.50px;top:695.39px;font-size:11px;color:#333;">jpg</div>
<div class="t" style="left:1321.00px;top:695.05px;font-size:11.4px;color:#333;">07/25/2019 11:22:57</div>
<div class="b" style="left:1604px;top:687px;width:75px;height:25px;border:1px solid #c6c6c6;border-radius:3px;background:#fff;"></div>
<div class="b" style="left:1682px;top:687px;width:64px;height:25px;border:1px solid #c6c6c6;border-radius:3px;background:#fff;"></div>
<div class="b" style="left:1750px;top:687px;width:66px;height:25px;border:1px solid #c6c6c6;border-radius:3px;background:#fff;"></div>
<svg class="b" style="left:1610px;top:691px;" width="16" height="16" viewBox="0 0 16 16"><path d="M1 15 L1.9 11 L11 1.9 L14.1 5 L5 14.1 Z" fill="#000" stroke="#000" stroke-width="0.6" stroke-linejoin="round"/><path d="M3 11.4 L11.4 3" stroke="#fff" stroke-width="0.7"/><path d="M11 1.9 L12.8 0.4 L15.6 3.2 L14.1 5 Z" fill="#000"/></svg>
<div class="t" style="left:1629.40px;top:694.99px;font-size:11px;color:#000;">Rename</div>
<svg class="b" style="left:1690px;top:691px;" width="16" height="16" viewBox="0 0 16 16"><path d="M8.5 1.2 H1.2 V12.3 H4" fill="none" stroke="#000" stroke-width="1.3"/><path d="M4.8 4 H10.6 L14.6 8 V15.3 H4.8 Z" fill="none" stroke="#000" stroke-width="1.3" stroke-linejoin="round"/><path d="M10.2 3.5 L15 8.3 H10.2 Z" fill="#000"/></svg>
<div class="t" style="left:1709.40px;top:694.73px;font-size:11.3px;color:#000;">Move</div>
<svg class="b" style="left:1757px;top:691px;" width="13" height="15" viewBox="0 0 13 15"><path d="M0.5 3.3 H12.3" stroke="#000" stroke-width="1.5"/><path d="M4.3 3 V0.9 H8.5 V3" fill="none" stroke="#000" stroke-width="1.3"/><path d="M2.1 4 H10.7 V14.2 H2.1 Z" fill="none" stroke="#000" stroke-width="1.3"/><path d="M4.6 5.5 V12.7 M6.4 5.5 V12.7 M8.2 5.5 V12.7" stroke="#000" stroke-width="1"/></svg>
<div class="t" style="left:1775.40px;top:694.73px;font-size:11.3px;color:#000;">Delete</div>
<div class="b" style="left:254px;top:724px;width:1570px;height:50px;background:#f0f0f0;"></div>
<div class="b" style="left:270px;top:740px;width:17px;height:17px;border:1.5px solid #cfcfcf;background:#fff;"></div>
<svg class="b" style="left:642px;top:733px;" width="32" height="32" viewBox="0 0 32 32"><defs><radialGradient id="rg9" cx="0.5" cy="0.5" r="0.7"><stop offset="0" stop-color="#ececec"/><stop offset="0.6" stop-color="#e2e2e2"/><stop offset="1" stop-color="#c9c9c9"/></radialGradient></defs><rect x="0" y="0" width="32" height="32" fill="url(#rg9)"/><path d="M12.5 4.5 Q16 7.5 19.5 4.5 L26.5 8 L28 13 L24.5 14 L23.5 12.5 V26.5 H10.5 V12.5 L9.5 14 L6 13 L7.5 8 Z" fill="#e6e6e6" stroke="#8a8a8a" stroke-width="1" stroke-linejoin="round"/><rect x="12.5" y="14" width="7" height="6" fill="none" stroke="#8a8a8a" stroke-width="0.9"/></svg>
<div class="t" style="left:704.00px;top:745.13px;font-size:11.3px;color:#222;">product-mensjersey2.jpg</div>
<div class="t" style="left:1029.50px;top:745.39px;font-size:11px;color:#333;">15.524 KB</div>
<div class="t" style="left:1155.50px;top:745.39px;font-size:11px;color:#333;">jpg</div>
<div class="t" style="left:1321.00px;top:745.05px;font-size:11.4px;color:#333;">07/25/2019 11:22:57</div>
<div class="b" style="left:1604px;top:737px;width:75px;height:25px;border:1px solid #c6c6c6;border-radius:3px;background:#fff;"></div>
<div class="b" style="left:1682px;top:737px;width:64px;height:25px;border:1px solid #c6c6c6;border-radius:3px;background:#fff;"></div>
<div class="b" style="left:1750px;top:737px;width:66px;height:25px;border:1px solid #c6c6c6;border-radius:3px;background:#fff;"></div>
<svg class="b" style="left:1610px;top:741px;" width="16" height="16" viewBox="0 0 16 16"><path d="M1 15 L1.9 11 L11 1.9 L14.1 5 L5 14.1 Z" fill="#000" stroke="#000" stroke-width="0.6" stroke-linejoin="round"/><path d="M3 11.4 L11.4 3" stroke="#fff" stroke-width="0.7"/><path d="M11 1.9 L12.8 0.4 L15.6 3.2 L14.1 5 Z" fill="#000"/></svg>
<div class="t" style="left:1629.40px;top:744.99px;font-size:11px;color:#000;">Rename</div>
<svg class="b" style="left:1690px;top:741px;" width="16" height="16" viewBox="0 0 16 16"><path d="M8.5 1.2 H1.2 V12.3 H4" fill="none" stroke="#000" stroke-width="1.3"/><path d="M4.8 4 H10.6 L14.6 8 V15.3 H4.8 Z" fill="none" stroke="#000" stroke-width="1.3" stroke-linejoin="round"/><path d="M10.2 3.5 L15 8.3 H10.2 Z" fill="#000"/></svg>
<div class="t" style="left:1709.40px;top:744.73px;font-size:11.3px;color:#000;">Move</div>
<svg class="b" style="left:1757px;top:741px;" width="13" height="15" viewBox="0 0 13 15"><path d="M0.5 3.3 H12.3" stroke="#000" stroke-width="1.5"/><path d="M4.3 3 V0.9 H8.5 V3" fill="none" stroke="#000" stroke-width="1.3"/><path d="M2.1 4 H10.7 V14.2 H2.1 Z" fill="none" stroke="#000" stroke-width="1.3"/><path d="M4.6 5.5 V12.7 M6.4 5.5 V12.7 M8.2 5.5 V12.7" stroke="#000" stroke-width="1"/></svg>
<div class="t" style="left:1775.40px;top:744.73px;font-size:11.3px;color:#000;">Delete</div>
<div class="b" style="left:254px;top:324px;width:1570px;height:1px;background:#dcdcdc;"></div>
<div class="b" style="left:254px;top:374px;width:1570px;height:1px;background:#dcdcdc;"></div>
<div class="b" style="left:254px;top:424px;width:1570px;height:1px;background:#dcdcdc;"></div>
<div class="b" style="left:254px;top:474px;width:1570px;height:1px;background:#dcdcdc;"></div>
<div class="b" style="left:254px;top:524px;width:1570px;height:1px;background:#dcdcdc;"></div>
<div class="b" style="left:254px;top:574px;width:1570px;height:1px;background:#dcdcdc;"></div>
<div class="b" style="left:254px;top:624px;width:1570px;height:1px;background:#dcdcdc;"></div>
<div class="b" style="left:254px;top:674px;width:1570px;height:1px;background:#dcdcdc;"></div>
<div class="b" style="left:254px;top:724px;width:1570px;height:1px;background:#dcdcdc;"></div>
<div class="b" style="left:632px;top:275px;width:147px;height:47px;border:4px solid #ff0000;"></div>
<div class="b" style="left:254px;top:774px;width:1570px;height:2px;background:#cfcfcf;"></div>
<div class="b" style="left:254px;top:776px;width:1570px;height:36px;background:linear-gradient(#f6f6f6,#e8e8e8);"></div>
<div class="b" style="left:258px;top:780px;width:24px;height:24px;border:1px solid #d8d8d8;border-radius:50%;"></div>
<svg class="b" style="left:258px;top:780px;" width="24" height="24" viewBox="0 0 24 24"><rect x="7.5" y="7.5" width="1.8" height="9" fill="#777"/><path d="M16 7.5 V16.5 L9.5 12 Z" fill="#777"/></svg>
<div class="b" style="left:284px;top:780px;width:24px;height:24px;border:1px solid #d8d8d8;border-radius:50%;"></div>
<svg class="b" style="left:284px;top:780px;" width="24" height="24" viewBox="0 0 24 24"><path d="M14.5 7.5 V16.5 L8 12 Z" fill="#777"/></svg>
<div class="b" style="left:311px;top:780px;width:24px;height:25px;border:1px solid #777;border-radius:50%;"></div>
<div class="t" style="left:311.00px;top:786.00px;font-size:13px;color:#222;width:24px;text-align:center;">1</div>
<div class="t" style="left:344.80px;top:786.00px;font-size:13px;color:#222;">2</div>
<div class="t" style="left:369.80px;top:786.00px;font-size:13px;color:#222;">3</div>
<div class="t" style="left:394.80px;top:786.00px;font-size:13px;color:#222;">4</div>
<div class="t" style="left:419.80px;top:786.00px;font-size:13px;color:#222;">5</div>
<div class="b" style="left:438px;top:780px;width:24px;height:24px;border:1px solid #d8d8d8;border-radius:50%;"></div>
<svg class="b" style="left:438px;top:780px;" width="24" height="24" viewBox="0 0 24 24"><path d="M9.5 7.5 V16.5 L16 12 Z" fill="#111"/></svg>
<div class="b" style="left:464px;top:780px;width:24px;height:24px;border:1px solid #d8d8d8;border-radius:50%;"></div>
<svg class="b" style="left:464px;top:780px;" width="24" height="24" viewBox="0 0 24 24"><path d="M8 7.5 V16.5 L14.5 12 Z" fill="#111"/><rect x="14.7" y="7.5" width="1.8" height="9" fill="#111"/></svg>
<div class="b" style="left:511px;top:779px;width:54px;height:29px;border:1px solid #cfcfcf;border-radius:3px;background:#fff;"></div>
<div class="t" style="left:519.60px;top:785.42px;font-size:12.5px;color:#333;">10</div>
<svg class="b" style="left:547px;top:787px;" width="10" height="8" viewBox="0 0 10 8"><path d="M0.5 0.5 H9 L4.75 7.5 Z" fill="#222"/></svg>
<div class="t" style="left:569.50px;top:787.03px;font-size:12.6px;color:#333;">items per page</div>
<div class="t" style="left:1681.50px;top:786.09px;font-size:12.3px;color:#444;">1 - 10 of 41 items</div>
<svg class="b" style="left:1798px;top:783px;" width="16" height="17" viewBox="0 0 16 17"><path d="M8.2 3.2 A5.9 5.9 0 1 0 13 6.2" fill="none" stroke="#000" stroke-width="2"/><path d="M7.6 0 L12.2 3.2 L7.6 6.4 Z" fill="#000"/></svg>
<div class="b" style="left:254px;top:843px;width:412px;height:34px;border:1px solid #cfcfcf;background:#fff;"></div>
<div class="t" style="left:264.00px;top:854.06px;font-size:13.4px;color:#333;">With selected files(s) / folder(s):</div>
<svg class="b" style="left:646px;top:852px;" width="9" height="13" viewBox="0 0 9 13"><path d="M0.5 5 L4.5 0.5 L8.5 5 Z M0.5 8 L4.5 12.5 L8.5 8 Z" fill="#333"/></svg>
<div class="b" style="left:665px;top:843px;width:60px;height:34px;border:1px solid #cfcfcf;background:#fff;"></div>
<div class="t" style="left:678.00px;top:853.97px;font-size:13.5px;color:#333;">Apply</div>
<div class="b" style="left:1726px;top:852px;width:112px;height:46px;background:#166ef0;border-radius:23px;"></div>
<svg class="b" style="left:1747px;top:865px;" width="21" height="22" viewBox="0 0 21 22"><path d="M10.5 1.5 A8.5 8.5 0 1 1 6.5 17.5 L2.5 20 L3.5 15 A8.5 8.5 0 0 1 10.5 1.5 Z" fill="none" stroke="#fff" stroke-width="2.4" stroke-linejoin="round"/></svg>
<div class="t" style="left:1776.70px;top:868.77px;font-size:14.8px;color:#fff;transform-origin:0 0;transform:scaleX(1.1616);font-weight:bold;">Chat</div>
<div class="b" style="left:1858px;top:0px;width:16px;height:912px;background:#f1f1f1;"></div>
<div class="b" style="left:1858px;top:17px;width:16px;height:732px;background:#c9c9c9;"></div>
<svg class="b" style="left:1858px;top:0px;" width="16" height="17" viewBox="0 0 16 17"><path d="M4.5 10.5 L8 7 L11.5 10.5" fill="none" stroke="#505050" stroke-width="1.6"/></svg>
<svg class="b" style="left:1858px;top:895px;" width="16" height="17" viewBox="0 0 16 17"><path d="M4.5 6.5 L8 10 L11.5 6.5" fill="none" stroke="#505050" stroke-width="1.6"/></svg>
</body></html>
